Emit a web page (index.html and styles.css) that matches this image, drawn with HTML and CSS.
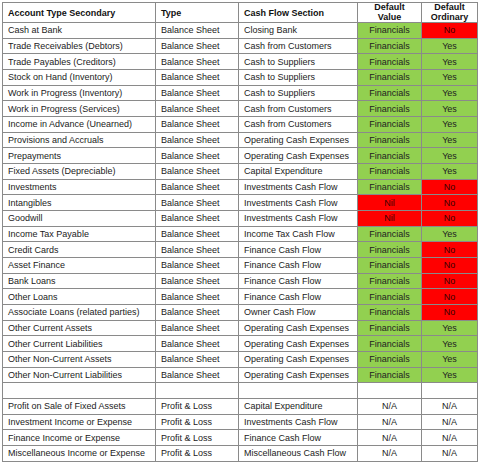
FILE: index.html
```html
<!DOCTYPE html>
<html>
<head>
<meta charset="utf-8">
<link rel="stylesheet" href="styles.css">
</head>
<body>
<table class="grid">
<colgroup>
<col class="c1"><col class="c2"><col class="c3"><col class="c4"><col class="c5">
</colgroup>
<thead>
<tr class="head"><th>Account Type Secondary</th><th>Type</th><th>Cash Flow Section</th><th class="ctr">Default<br>Value</th><th class="ctr">Default<br>Ordinary</th></tr>
</thead>
<tbody>
<tr><td>Cash at Bank</td><td>Balance Sheet</td><td>Closing Bank</td><td class="g">Financials</td><td class="r">No</td></tr>
<tr><td>Trade Receivables (Debtors)</td><td>Balance Sheet</td><td>Cash from Customers</td><td class="g">Financials</td><td class="g">Yes</td></tr>
<tr><td>Trade Payables (Creditors)</td><td>Balance Sheet</td><td>Cash to Suppliers</td><td class="g">Financials</td><td class="g">Yes</td></tr>
<tr><td>Stock on Hand (Inventory)</td><td>Balance Sheet</td><td>Cash to Suppliers</td><td class="g">Financials</td><td class="g">Yes</td></tr>
<tr><td>Work in Progress (Inventory)</td><td>Balance Sheet</td><td>Cash to Suppliers</td><td class="g">Financials</td><td class="g">Yes</td></tr>
<tr><td>Work in Progress (Services)</td><td>Balance Sheet</td><td>Cash from Customers</td><td class="g">Financials</td><td class="g">Yes</td></tr>
<tr><td>Income in Advance (Unearned)</td><td>Balance Sheet</td><td>Cash from Customers</td><td class="g">Financials</td><td class="g">Yes</td></tr>
<tr><td>Provisions and Accruals</td><td>Balance Sheet</td><td>Operating Cash Expenses</td><td class="g">Financials</td><td class="g">Yes</td></tr>
<tr><td>Prepayments</td><td>Balance Sheet</td><td>Operating Cash Expenses</td><td class="g">Financials</td><td class="g">Yes</td></tr>
<tr><td>Fixed Assets (Depreciable)</td><td>Balance Sheet</td><td>Capital Expenditure</td><td class="g">Financials</td><td class="g">Yes</td></tr>
<tr><td>Investments</td><td>Balance Sheet</td><td>Investments Cash Flow</td><td class="g">Financials</td><td class="r">No</td></tr>
<tr><td>Intangibles</td><td>Balance Sheet</td><td>Investments Cash Flow</td><td class="r">Nil</td><td class="r">No</td></tr>
<tr><td>Goodwill</td><td>Balance Sheet</td><td>Investments Cash Flow</td><td class="r">Nil</td><td class="r">No</td></tr>
<tr><td>Income Tax Payable</td><td>Balance Sheet</td><td>Income Tax Cash Flow</td><td class="g">Financials</td><td class="g">Yes</td></tr>
<tr><td>Credit Cards</td><td>Balance Sheet</td><td>Finance Cash Flow</td><td class="g">Financials</td><td class="r">No</td></tr>
<tr><td>Asset Finance</td><td>Balance Sheet</td><td>Finance Cash Flow</td><td class="g">Financials</td><td class="r">No</td></tr>
<tr><td>Bank Loans</td><td>Balance Sheet</td><td>Finance Cash Flow</td><td class="g">Financials</td><td class="r">No</td></tr>
<tr><td>Other Loans</td><td>Balance Sheet</td><td>Finance Cash Flow</td><td class="g">Financials</td><td class="r">No</td></tr>
<tr><td>Associate Loans (related parties)</td><td>Balance Sheet</td><td>Owner Cash Flow</td><td class="g">Financials</td><td class="r">No</td></tr>
<tr><td>Other Current Assets</td><td>Balance Sheet</td><td>Operating Cash Expenses</td><td class="g">Financials</td><td class="g">Yes</td></tr>
<tr><td>Other Current Liabilities</td><td>Balance Sheet</td><td>Operating Cash Expenses</td><td class="g">Financials</td><td class="g">Yes</td></tr>
<tr><td>Other Non-Current Assets</td><td>Balance Sheet</td><td>Operating Cash Expenses</td><td class="g">Financials</td><td class="g">Yes</td></tr>
<tr><td>Other Non-Current Liabilities</td><td>Balance Sheet</td><td>Operating Cash Expenses</td><td class="g">Financials</td><td class="g">Yes</td></tr>
<tr><td></td><td></td><td></td><td></td><td></td></tr>
<tr><td>Profit on Sale of Fixed Assets</td><td>Profit &amp; Loss</td><td>Capital Expenditure</td><td class="ctr">N/A</td><td class="ctr">N/A</td></tr>
<tr><td>Investment Income or Expense</td><td>Profit &amp; Loss</td><td>Investments Cash Flow</td><td class="ctr">N/A</td><td class="ctr">N/A</td></tr>
<tr><td>Finance Income or Expense</td><td>Profit &amp; Loss</td><td>Finance Cash Flow</td><td class="ctr">N/A</td><td class="ctr">N/A</td></tr>
<tr><td>Miscellaneous Income or Expense</td><td>Profit &amp; Loss</td><td>Miscellaneous Cash Flow</td><td class="ctr">N/A</td><td class="ctr">N/A</td></tr>
</tbody>
</table>
</body>
</html>
```
FILE: styles.css
```css
html, body {
  margin: 0;
  padding: 0;
  background: #ffffff;
}
body {
  padding: 2px 0 0 2px;
  font-family: "Liberation Sans", Arial, sans-serif;
  font-size: 9px;
  color: #222222;
}
.grid {
  border-collapse: collapse;
  table-layout: fixed;
  width: 476px;
}
.c1 { width: 153px; }
.c2 { width: 83px; }
.c3 { width: 119px; }
.c4 { width: 64px; }
.c5 { width: 56px; }
.grid th, .grid td {
  border: 1px solid #8a8a8a;
  padding: 0 0 0 5px;
  white-space: nowrap;
  overflow: hidden;
  text-align: left;
  vertical-align: middle;
  line-height: 10px;
}
.grid tbody tr {
  height: 15.68px;
}
.grid thead tr {
  height: 20px;
}
.grid th {
  font-weight: bold;
  color: #111111;
}
.grid .ctr, .grid .g, .grid .r {
  text-align: center;
  padding: 0;
}
.grid th.ctr {
  line-height: 9.5px;
}
.g {
  background: #92d050;
}
.r {
  background: #ff0000;
  color: #3a0000;
}
```
